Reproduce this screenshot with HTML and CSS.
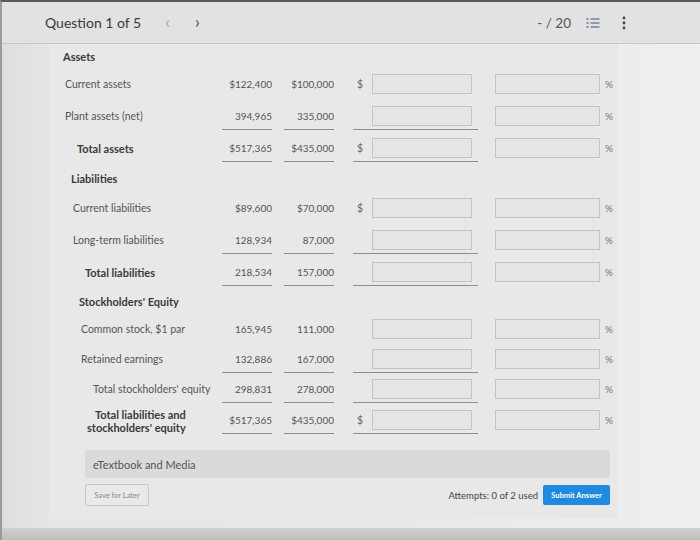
FILE: index.html
```html
<!DOCTYPE html>
<html>
<head>
<meta charset="utf-8">
<link rel="stylesheet" href="styles.css">
</head>
<body>
<div class="screen">
  <header class="topbar">
    <div class="qnav">
      <span class="qtitle">Question 1 of 5</span>
      <span class="chev prev">&lsaquo;</span>
      <span class="chev next">&rsaquo;</span>
    </div>
    <div class="qtools">
      <span class="score">- / 20</span>
      <svg class="listicon" width="14" height="12" viewBox="0 0 14 12">
        <circle cx="1.5" cy="2" r="1.1" fill="#6d7f96"/>
        <circle cx="1.5" cy="6" r="1.1" fill="#6d7f96"/>
        <circle cx="1.5" cy="10" r="1.1" fill="#6d7f96"/>
        <rect x="4.5" y="1.3" width="9" height="1.4" fill="#6d7f96"/>
        <rect x="4.5" y="5.3" width="9" height="1.4" fill="#6d7f96"/>
        <rect x="4.5" y="9.3" width="9" height="1.4" fill="#6d7f96"/>
      </svg>
      <svg class="kebab" width="4" height="14" viewBox="0 0 4 14">
        <circle cx="2" cy="2" r="1.4" fill="#3c4350"/>
        <circle cx="2" cy="7" r="1.4" fill="#3c4350"/>
        <circle cx="2" cy="12" r="1.4" fill="#3c4350"/>
      </svg>
    </div>
  </header>

  <main class="card">
    <div class="sheet">
      <div class="row sec first"><div class="lbl b ga">Assets</div></div>

      <div class="row">
        <div class="lbl item ga">Current assets</div>
        <div class="amt a1">$122,400</div>
        <div class="amt a2">$100,000</div>
        <div class="dcell"><span class="dol">$</span><span class="box"></span></div>
        <div class="pcell"><span class="box w2"></span><span class="pct">%</span></div>
      </div>

      <div class="row">
        <div class="lbl item ga">Plant assets (net)</div>
        <div class="amt a1 ul">394,965</div>
        <div class="amt a2 ul">335,000</div>
        <div class="dcell ul"><span class="dol"></span><span class="box"></span></div>
        <div class="pcell"><span class="box w2"></span><span class="pct">%</span></div>
      </div>

      <div class="row">
        <div class="lbl tot b ga">Total assets</div>
        <div class="amt a1 ul">$517,365</div>
        <div class="amt a2 ul">$435,000</div>
        <div class="dcell ul"><span class="dol">$</span><span class="box"></span></div>
        <div class="pcell"><span class="box w2"></span><span class="pct">%</span></div>
      </div>

      <div class="row sec"><div class="lbl b gl">Liabilities</div></div>

      <div class="row">
        <div class="lbl item gl">Current liabilities</div>
        <div class="amt a1">$89,600</div>
        <div class="amt a2">$70,000</div>
        <div class="dcell"><span class="dol">$</span><span class="box"></span></div>
        <div class="pcell"><span class="box w2"></span><span class="pct">%</span></div>
      </div>

      <div class="row">
        <div class="lbl item gl">Long-term liabilities</div>
        <div class="amt a1 ul">128,934</div>
        <div class="amt a2 ul">87,000</div>
        <div class="dcell ul"><span class="dol"></span><span class="box"></span></div>
        <div class="pcell"><span class="box w2"></span><span class="pct">%</span></div>
      </div>

      <div class="row">
        <div class="lbl tot b gl">Total liabilities</div>
        <div class="amt a1 ul">218,534</div>
        <div class="amt a2 ul">157,000</div>
        <div class="dcell ul"><span class="dol"></span><span class="box"></span></div>
        <div class="pcell"><span class="box w2"></span><span class="pct">%</span></div>
      </div>

      <div class="row sec eq"><div class="lbl b ge">Stockholders' Equity</div></div>

      <div class="row tight">
        <div class="lbl item ge">Common stock, $1 par</div>
        <div class="amt a1">165,945</div>
        <div class="amt a2">111,000</div>
        <div class="dcell"><span class="dol"></span><span class="box"></span></div>
        <div class="pcell"><span class="box w2"></span><span class="pct">%</span></div>
      </div>

      <div class="row tight">
        <div class="lbl item ge">Retained earnings</div>
        <div class="amt a1 ul">132,886</div>
        <div class="amt a2 ul">167,000</div>
        <div class="dcell ul"><span class="dol"></span><span class="box"></span></div>
        <div class="pcell"><span class="box w2"></span><span class="pct">%</span></div>
      </div>

      <div class="row tight">
        <div class="lbl tot ge">Total stockholders' equity</div>
        <div class="amt a1 ul">298,831</div>
        <div class="amt a2 ul">278,000</div>
        <div class="dcell ul"><span class="dol"></span><span class="box"></span></div>
        <div class="pcell"><span class="box w2"></span><span class="pct">%</span></div>
      </div>

      <div class="row">
        <div class="lbl grand b">Total liabilities and stockholders' equity</div>
        <div class="amt a1 ul">$517,365</div>
        <div class="amt a2 ul">$435,000</div>
        <div class="dcell ul"><span class="dol">$</span><span class="box"></span></div>
        <div class="pcell"><span class="box w2"></span><span class="pct">%</span></div>
      </div>
    </div>

    <div class="media">eTextbook and Media</div>

    <div class="actions">
      <button class="save">Save for Later</button>
      <div class="submitarea">
        <span class="attempts">Attempts: 0 of 2 used</span>
        <button class="submit">Submit Answer</button>
      </div>
    </div>
  </main>
  <div class="bottomstrip"></div>
</div>
</body>
</html>
```

FILE: styles.css
```css
* { box-sizing: border-box; }

html, body {
  margin: 0;
  padding: 0;
}

body {
  width: 700px;
  height: 540px;
  overflow: hidden;
  background: #eaeaea;
  font-family: Lato, "Open Sans", Arial, sans-serif;
  color: #555;
}

.screen {
  position: relative;
  width: 700px;
  height: 540px;
  border-top: 2px solid #5a5a5a;
  border-left: 2px solid #9a9a9a;
  background: linear-gradient(90deg, #dedede 0px, #e6e6e6 50px, #e9e9e9 400px, #efefef 700px);
}

.topbar {
  height: 42px;
  display: flex;
  align-items: center;
  justify-content: space-between;
  padding-left: 43px;
  padding-right: 74px;
  background: #e2e2e2;
  border-bottom: 1px solid #c6c6c6;
}

.qnav {
  display: flex;
  align-items: center;
}

.qtitle {
  font-size: 14px;
  color: #3a3a3a;
}

.chev {
  font-size: 17px;
  line-height: 1;
  margin-top: -2px;
}

.prev {
  margin-left: 24px;
  color: #a7a7a7;
}

.next {
  margin-left: 25px;
  color: #4a4a4a;
}

.qtools {
  display: flex;
  align-items: center;
}

.score {
  font-size: 13.5px;
  color: #555;
}

.listicon {
  margin-left: 15px;
}

.kebab {
  margin-left: 22px;
}

.card {
  margin-left: 48px;
  width: 568px;
  padding-left: 13px;
  padding-bottom: 12px;
  background: #e8e8e8;
}

.sheet {
  display: flex;
  flex-direction: column;
}

.row {
  display: grid;
  grid-template-columns: 159px 50px 62px 144px 150px;
  height: 32px;
  align-items: center;
}

.row.sec {
  height: 28px;
}

.row.sec.first {
  height: 24px;
}

.row.sec.eq {
  height: 26px;
}

.row.tight {
  height: 30px;
}

.lbl {
  font-size: 10.5px;
  color: #555;
  white-space: nowrap;
}

.lbl.b {
  font-weight: 700;
  color: #3a3a3a;
  font-size: 11px;
}

.ga { padding-left: 0; }
.gl { padding-left: 8px; }
.ge { padding-left: 16px; }

.lbl.item { margin-left: 2px; }
.lbl.tot { margin-left: 14px; }

.lbl.grand {
  white-space: normal;
  padding-left: 24px;
  text-indent: 8px;
  line-height: 13px;
  width: 150px;
  margin-top: 2px;
}

.amt {
  height: 28px;
  display: flex;
  align-items: center;
  justify-content: flex-end;
  font-size: 10px;
  color: #555;
}

.a2 {
  margin-left: 12px;
}

.ul {
  border-bottom: 1.5px solid #8d8d8d;
}

.amt.ul, .dcell.ul {
  padding-top: 1px;
}

.dcell {
  height: 28px;
  margin-left: 19px;
  display: flex;
  align-items: center;
  justify-content: space-between;
  padding-left: 4px;
  padding-right: 6px;
}

.dol {
  font-size: 10.5px;
  color: #666;
}

.box {
  display: block;
  width: 100px;
  height: 20px;
  border: 1px solid #c3c3c3;
  background: #e5e5e5;
}

.box.w2 {
  width: 105px;
}

.pcell {
  display: flex;
  align-items: center;
  padding-left: 17px;
}

.pct {
  margin-left: 5px;
  font-size: 10px;
  color: #777;
}

.media {
  margin-top: 14px;
  margin-left: 22px;
  width: 525px;
  height: 28px;
  display: flex;
  align-items: center;
  padding-left: 8px;
  background: #dadada;
  border-radius: 3px;
  font-size: 11px;
  color: #555;
}

.actions {
  margin-left: 22px;
  width: 525px;
  margin-top: 6px;
  display: flex;
  justify-content: space-between;
  align-items: center;
}

.save {
  height: 22px;
  width: 64px;
  padding: 0;
  border: 1px solid #c9c9c9;
  background: #e9e9e9;
  border-radius: 2px;
  font-family: Lato, Arial, sans-serif;
  font-size: 7.5px;
  color: #8a8a8a;
}

.submitarea {
  display: flex;
  align-items: center;
}

.attempts {
  font-size: 9.5px;
  color: #444;
}

.submit {
  margin-left: 5px;
  height: 20px;
  width: 67px;
  padding: 0;
  border: none;
  border-radius: 2px;
  background: #1f8ae0;
  color: #fff;
  font-family: Lato, Arial, sans-serif;
  font-weight: 700;
  font-size: 7.5px;
}

.bottomstrip {
  position: absolute;
  left: 0;
  right: 0;
  bottom: 0;
  height: 12px;
  background: linear-gradient(180deg, #d2d2d2, #bdbdbd);
}
```
